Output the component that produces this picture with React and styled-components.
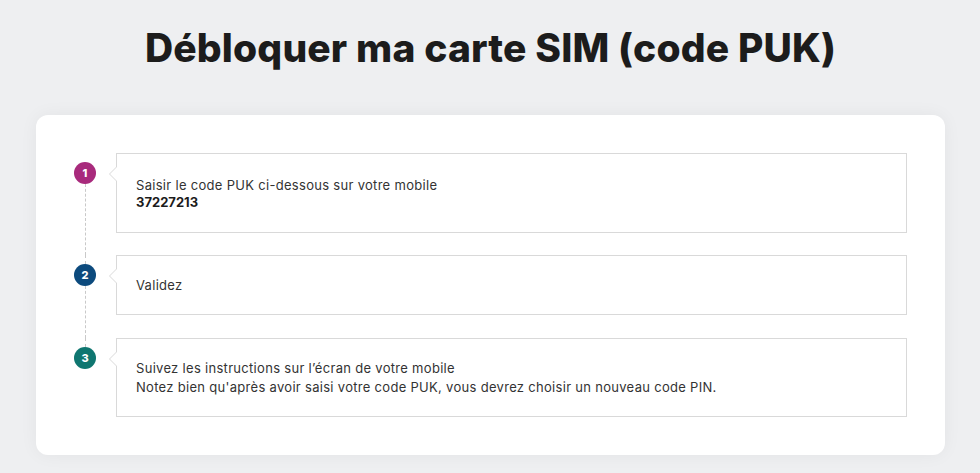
import React from "react";
import styled, { createGlobalStyle } from "styled-components";

const GlobalStyle = createGlobalStyle`
    html, body {
        margin: 0;
        padding: 0;
        background: #eeeff1;
    }
    body {
        font-family: Inter, "Noto Sans", sans-serif;
        color: #333;
    }
`;

const Page = styled.div`
    padding: 24px 35px 18px 36px;
`;

const Title = styled.h1`
    margin: 0 0 43px;
    text-align: center;
    font-size: 39px;
    line-height: 48px;
    font-weight: 800;
    color: #1c1c1c;
    letter-spacing: 0.15px;
`;

const Card = styled.div`
    background: #fff;
    border-radius: 12px;
    box-shadow: 0 0 18px rgba(0, 0, 0, 0.05);
    padding: 38px 38px 38px 38px;
`;

const StepRow = styled.div`
    display: grid;
    grid-template-columns: 42px 1fr;
`;

const Marker = styled.div`
    display: flex;
    flex-direction: column;
    align-items: center;
    width: 22px;
`;

const Connector = styled.div`
    width: 0;
    border-left: 1px dashed ${(p) => (p.$hidden ? "transparent" : "#c9c9c9")};
    height: ${(p) => (p.$grow ? "auto" : "9px")};
    flex: ${(p) => (p.$grow ? 1 : "none")};
`;

const Dot = styled.div`
    width: 22px;
    height: 22px;
    border-radius: 50%;
    background: ${(p) => p.$color};
    color: #fff;
    font-size: 11px;
    font-weight: 800;
    display: flex;
    align-items: center;
    justify-content: center;
    flex: none;
`;

const BoxCell = styled.div`
    padding-bottom: ${(p) => p.$gap}px;
`;

const Box = styled.div`
    position: relative;
    border: 1px solid #d9d9d9;
    min-height: ${(p) => p.$height}px;
    box-sizing: border-box;
    padding: 0 19px;
    display: flex;
    flex-direction: column;
    justify-content: center;
    font-size: 13px;
    letter-spacing: 0.3px;
    line-height: 19px;
    color: #333;

    &::before,
    &::after {
        content: "";
        position: absolute;
        width: 0;
        height: 0;
        border-style: solid;
    }
    &::before {
        left: -8px;
        top: 12px;
        border-width: 8px 8px 8px 0;
        border-color: transparent #d9d9d9 transparent transparent;
    }
    &::after {
        left: -7px;
        top: 13px;
        border-width: 7px 7px 7px 0;
        border-color: transparent #fff transparent transparent;
    }
`;

const Line = styled.div`
    line-height: ${(p) => p.$lh || 19}px;
`;

const Code = styled.div`
    font-weight: 700;
    color: #1c1c1c;
    line-height: 16px;
    letter-spacing: 0;
`;

const steps = [
    {
        color: "#a82a7c",
        height: 80,
        gap: 22,
        content: (
            <>
                <Line $lh={17}>Saisir le code PUK ci-dessous sur votre mobile</Line>
                <Code>37227213</Code>
            </>
        ),
    },
    {
        color: "#0c4a7d",
        height: 60,
        gap: 23,
        content: <Line>Validez</Line>,
    },
    {
        color: "#0f7670",
        height: 79,
        gap: 0,
        content: (
            <>
                <Line>Suivez les instructions sur l’écran de votre mobile</Line>
                <Line>
                    Notez bien qu'après avoir saisi votre code PUK, vous devrez choisir un nouveau code PIN.
                </Line>
            </>
        ),
    },
];

export default function App() {
    return (
        <>
            <GlobalStyle />
            <Page>
                <Title>Débloquer ma carte SIM (code PUK)</Title>
                <Card>
                    {steps.map((step, i) => {
                        const last = i === steps.length - 1;
                        return (
                            <StepRow key={i}>
                                <Marker>
                                    <Connector $hidden={i === 0} />
                                    <Dot $color={step.color}>{i + 1}</Dot>
                                    <Connector $grow $hidden={last} />
                                </Marker>
                                <BoxCell $gap={step.gap}>
                                    <Box $height={step.height}>{step.content}</Box>
                                </BoxCell>
                            </StepRow>
                        );
                    })}
                </Card>
            </Page>
        </>
    );
}
